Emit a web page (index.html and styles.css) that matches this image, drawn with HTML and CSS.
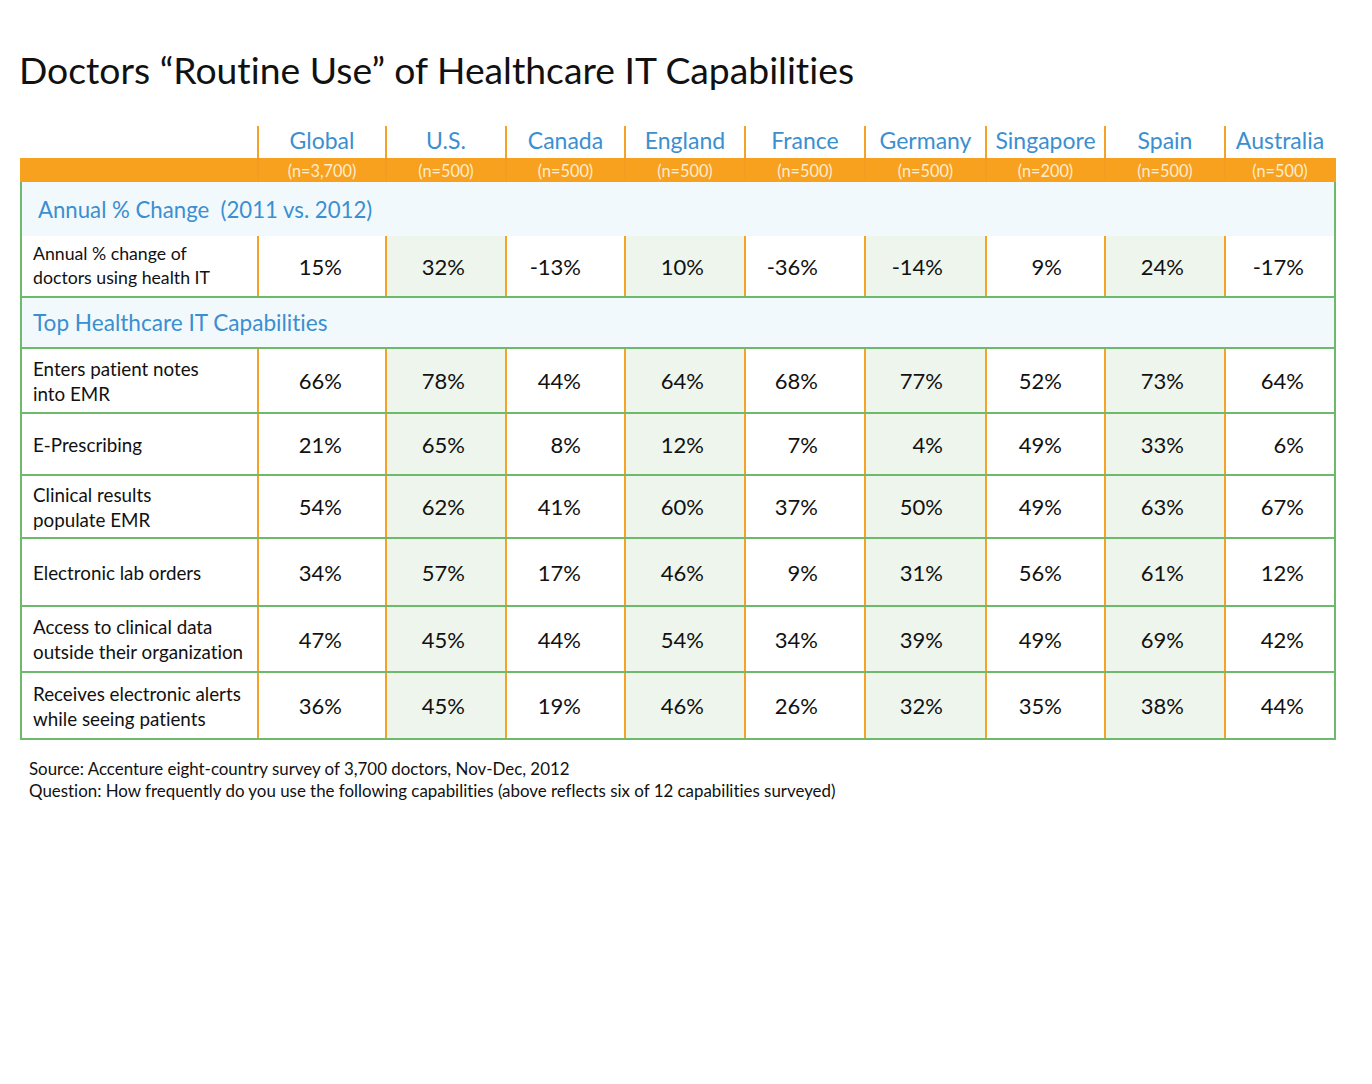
FILE: index.html
```html
<!DOCTYPE html>
<html lang="en">
<head>
<meta charset="utf-8">
<title>Doctors “Routine Use” of Healthcare IT Capabilities</title>
<link rel="stylesheet" href="styles.css">
</head>
<body>
<main class="page">
  <h1 class="title">Doctors “Routine Use” of Healthcare IT Capabilities</h1>

  <div class="table">
    <div class="row head">
      <div class="cell label"></div>
      <div class="cell country">Global</div>
      <div class="cell country">U.S.</div>
      <div class="cell country">Canada</div>
      <div class="cell country">England</div>
      <div class="cell country">France</div>
      <div class="cell country">Germany</div>
      <div class="cell country">Singapore</div>
      <div class="cell country">Spain</div>
      <div class="cell country">Australia</div>
    </div>
    <div class="row nbar">
      <div class="cell label"></div>
      <div class="cell n">(n=3,700)</div>
      <div class="cell n">(n=500)</div>
      <div class="cell n">(n=500)</div>
      <div class="cell n">(n=500)</div>
      <div class="cell n">(n=500)</div>
      <div class="cell n">(n=500)</div>
      <div class="cell n">(n=200)</div>
      <div class="cell n">(n=500)</div>
      <div class="cell n">(n=500)</div>
    </div>

    <div class="section first">Annual % Change&nbsp; (2011 vs. 2012)</div>
    <div class="row data h62">
      <div class="cell label small">Annual % change of<br>doctors using health IT</div>
      <div class="cell val">15%</div>
      <div class="cell val">32%</div>
      <div class="cell val">-13%</div>
      <div class="cell val">10%</div>
      <div class="cell val">-36%</div>
      <div class="cell val">-14%</div>
      <div class="cell val">9%</div>
      <div class="cell val">24%</div>
      <div class="cell val">-17%</div>
    </div>

    <div class="section second">Top Healthcare IT Capabilities</div>
    <div class="row data h65">
      <div class="cell label">Enters patient notes<br>into EMR</div>
      <div class="cell val">66%</div>
      <div class="cell val">78%</div>
      <div class="cell val">44%</div>
      <div class="cell val">64%</div>
      <div class="cell val">68%</div>
      <div class="cell val">77%</div>
      <div class="cell val">52%</div>
      <div class="cell val">73%</div>
      <div class="cell val">64%</div>
    </div>
    <div class="row data h62">
      <div class="cell label">E-Prescribing</div>
      <div class="cell val">21%</div>
      <div class="cell val">65%</div>
      <div class="cell val">8%</div>
      <div class="cell val">12%</div>
      <div class="cell val">7%</div>
      <div class="cell val">4%</div>
      <div class="cell val">49%</div>
      <div class="cell val">33%</div>
      <div class="cell val">6%</div>
    </div>
    <div class="row data h63">
      <div class="cell label">Clinical results<br>populate EMR</div>
      <div class="cell val">54%</div>
      <div class="cell val">62%</div>
      <div class="cell val">41%</div>
      <div class="cell val">60%</div>
      <div class="cell val">37%</div>
      <div class="cell val">50%</div>
      <div class="cell val">49%</div>
      <div class="cell val">63%</div>
      <div class="cell val">67%</div>
    </div>
    <div class="row data h68">
      <div class="cell label">Electronic lab orders</div>
      <div class="cell val">34%</div>
      <div class="cell val">57%</div>
      <div class="cell val">17%</div>
      <div class="cell val">46%</div>
      <div class="cell val">9%</div>
      <div class="cell val">31%</div>
      <div class="cell val">56%</div>
      <div class="cell val">61%</div>
      <div class="cell val">12%</div>
    </div>
    <div class="row data h66">
      <div class="cell label">Access to clinical data<br>outside their organization</div>
      <div class="cell val">47%</div>
      <div class="cell val">45%</div>
      <div class="cell val">44%</div>
      <div class="cell val">54%</div>
      <div class="cell val">34%</div>
      <div class="cell val">39%</div>
      <div class="cell val">49%</div>
      <div class="cell val">69%</div>
      <div class="cell val">42%</div>
    </div>
    <div class="row data h67">
      <div class="cell label">Receives electronic alerts<br>while seeing patients</div>
      <div class="cell val">36%</div>
      <div class="cell val">45%</div>
      <div class="cell val">19%</div>
      <div class="cell val">46%</div>
      <div class="cell val">26%</div>
      <div class="cell val">32%</div>
      <div class="cell val">35%</div>
      <div class="cell val">38%</div>
      <div class="cell val">44%</div>
    </div>
  </div>

  <footer class="notes">
    <p>Source: Accenture eight-country survey of 3,700 doctors, Nov-Dec, 2012</p>
    <p>Question: How frequently do you use the following capabilities (above reflects six of 12 capabilities surveyed)</p>
  </footer>
</main>
</body>
</html>
```

FILE: styles.css
```css
html, body {
  margin: 0;
  padding: 0;
  background: #ffffff;
}

body {
  font-family: "Lato", "Open Sans", "Liberation Sans", sans-serif;
  font-variant-ligatures: none;
  color: #111111;
}

.page {
  padding: 48px 0 0 20px;
  width: 1316px;
}

.title {
  margin: 0 0 0 -1px;
  font-weight: 400;
  font-size: 37.3px;
  line-height: 44px;
  color: #111111;
  height: 78px;
}

.table {
  display: flex;
  flex-direction: column;
}

.row {
  display: grid;
  grid-template-columns: 235px 128px 120px 119px 120px 120px 121px 119px 120px 110px;
  border-left: 2px solid #6cba6a;
  border-right: 2px solid #6cba6a;
  box-sizing: border-box;
}

.cell {
  box-sizing: border-box;
  display: flex;
  align-items: center;
}

.row .cell + .cell {
  border-left: 2px solid #f6a225;
}

/* header with country names */
.row.head {
  border-color: transparent;
  height: 32px;
}

.country {
  justify-content: center;
  color: #3b8fd1;
  font-size: 23px;
  padding-bottom: 4px;
}

/* orange n= bar */
.row.nbar {
  background: #f8a11e;
  border-color: #f8a11e;
  height: 24px;
}

.row.nbar .cell + .cell {
  border-left-color: #f59d20;
}

.n {
  justify-content: center;
  color: #feecd0;
  font-size: 16.3px;
}

/* section bands */
.section {
  background: #f2f9fc;
  border-left: 2px solid #6cba6a;
  border-right: 2px solid #6cba6a;
  color: #3b8fd1;
  font-size: 22.2px;
  display: flex;
  align-items: center;
  box-sizing: border-box;
}

.section.first {
  height: 54px;
  padding-left: 16px;
}

.section.second {
  height: 51px;
  padding-left: 11px;
  border-bottom: 2px solid #6cba6a;
  font-size: 22.6px;
}

/* data rows */
.row.data {
  border-bottom: 2px solid #6cba6a;
}

.row.data .cell:nth-child(3),
.row.data .cell:nth-child(5),
.row.data .cell:nth-child(7),
.row.data .cell:nth-child(9) {
  background: #eef5ed;
}

.h62 { height: 62px; }
.h63 { height: 63px; }
.h65 { height: 65px; }
.h66 { height: 66px; }
.h67 { height: 67px; }
.h68 { height: 68px; }

.label {
  padding-left: 11px;
  font-size: 18.8px;
  line-height: 25px;
  color: #111111;
}

.label.small {
  font-size: 17.7px;
  line-height: 24px;
}

.val {
  justify-content: flex-end;
  font-size: 22px;
  color: #111111;
  padding-right: 42px;
}

.val:nth-child(2) { padding-right: 43px; }
.val:nth-child(3) { padding-right: 40px; }
.val:nth-child(4) { padding-right: 43px; }
.val:nth-child(5) { padding-right: 40px; }
.val:nth-child(6) { padding-right: 46px; }
.val:nth-child(7) { padding-right: 42px; }
.val:nth-child(8) { padding-right: 42px; }
.val:nth-child(9) { padding-right: 40px; }
.val:nth-child(10) { padding-right: 30px; }

/* footer notes */
.notes {
  padding: 18px 0 0 9px;
  font-size: 16.9px;
  line-height: 22px;
  color: #111111;
}

.notes p {
  margin: 0;
}
```
